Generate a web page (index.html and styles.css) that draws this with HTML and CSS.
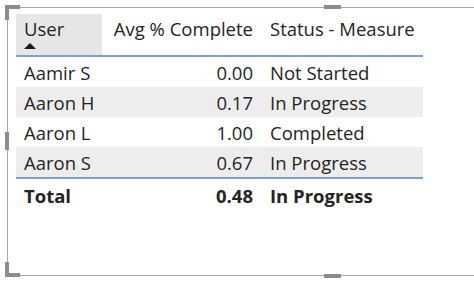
FILE: index.html
```html
<!DOCTYPE html>
<html lang="en">
<head>
    <meta charset="UTF-8">
    <meta name="viewport" content="width=device-width, initial-scale=1.0">
    <title>User Completion</title>
    <link rel="stylesheet" href="styles.css">
</head>
<body>
    <div class="visual">
        <!-- selection handles on the visual frame -->
        <span class="handle corner-tl"></span>
        <span class="handle corner-bl"></span>
        <span class="handle bar-top"></span>
        <span class="handle bar-bottom"></span>
        <span class="handle bar-left"></span>

        <table class="grid">
            <colgroup>
                <col class="c-user">
                <col class="c-avg">
                <col class="c-status">
            </colgroup>
            <thead>
                <tr>
                    <th class="sorted">User<span class="sort-arrow"></span></th>
                    <th class="num">Avg % Complete</th>
                    <th>Status - Measure</th>
                </tr>
            </thead>
            <tbody>
                <tr><td>Aamir S</td><td class="num">0.00</td><td>Not Started</td></tr>
                <tr class="alt"><td>Aaron H</td><td class="num">0.17</td><td>In Progress</td></tr>
                <tr><td>Aaron L</td><td class="num">1.00</td><td>Completed</td></tr>
                <tr class="alt"><td>Aaron S</td><td class="num">0.67</td><td>In Progress</td></tr>
            </tbody>
            <tfoot>
                <tr><td>Total</td><td class="num">0.48</td><td>In Progress</td></tr>
            </tfoot>
        </table>
    </div>

    <!-- next visual peeking out under the frame -->
    <div class="next-visual">
        <span class="nv-1">User</span>
        <span class="nv-2">Avg % Complete</span>
        <span class="nv-3">Status - Measure</span>
    </div>
</body>
</html>
```

FILE: styles.css
```css
html, body { margin: 0; padding: 0; }
body { width: 474px; height: 282px; overflow: hidden; background: #fff; font-family: "Open Sans", "Noto Sans", sans-serif; color: #252423; }

.visual { position: relative; margin: 7px 0 0 7px; height: 269px; border-top: 1px solid #a8a8a8; border-left: 1px solid #a8a8a8; border-bottom: 1px solid #a8a8a8; box-sizing: border-box; padding: 6px 0 0 8px; }

.handle { position: absolute; background: #8c8c8c; }
.corner-tl { left: -3px; top: -3px; width: 15px; height: 4px; }
.corner-tl::after { content: ""; position: absolute; left: 0; top: 0; width: 4px; height: 15px; background: #8c8c8c; }
.corner-bl { left: -3px; bottom: -2px; width: 15px; height: 4px; }
.corner-bl::after { content: ""; position: absolute; left: 0; bottom: 0; width: 4px; height: 15px; background: #8c8c8c; }
.bar-top { left: 316px; top: -3px; width: 17px; height: 4px; }
.bar-bottom { left: 316px; bottom: -3px; width: 17px; height: 4px; }
.bar-left { left: -3px; top: 124px; width: 4px; height: 18px; }

.grid { border-collapse: collapse; table-layout: fixed; width: 407px; font-size: 18.5px; }
.c-user { width: 86px; }
.c-avg { width: 160px; }
.c-status { width: 161px; }

.grid th { font-weight: normal; text-align: left; vertical-align: top; height: 42px; padding: 2px 8px 0 8px; box-sizing: border-box; white-space: nowrap; border-bottom: 2px solid #7aa0dc; }
.grid th.sorted { background: #e6e6e6; position: relative; }
.grid th.num { text-align: right; padding-right: 9px; }
.sort-arrow { position: absolute; left: 8px; top: 29px; width: 0; height: 0; border-left: 6px solid transparent; border-right: 6px solid transparent; border-bottom: 6px solid #1b1b1b; }

.grid td { height: 30px; padding: 0 8px; white-space: nowrap; }
.grid td.num { text-align: right; padding-right: 9px; }
.grid tr.alt td { background: #eeeded; }
.grid tbody tr:last-child td { border-bottom: 2px solid #7aa0dc; }
.grid tfoot td { font-weight: bold; height: 32px; }

.next-visual { position: relative; height: 6px; overflow: hidden; font-size: 17px; color: #3a3a3a; }
.next-visual span { position: absolute; top: 0; }
.nv-1 { left: 38px; }
.nv-2 { left: 128px; }
.nv-3 { left: 272px; }
```
